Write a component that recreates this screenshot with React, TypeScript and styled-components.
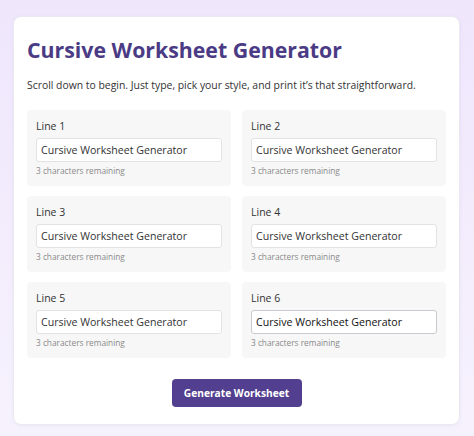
import React from "react";
import styled, { createGlobalStyle } from "styled-components";

const Global = createGlobalStyle`
  html, body {
    margin: 0;
    padding: 0;
  }
  body {
    font-family: "Open Sans", "Liberation Sans", sans-serif;
    background: linear-gradient(180deg, #efe6fc 0%, #f6f2fd 100%);
    min-height: 436px;
  }
`;

const Page = styled.div`
  padding: 16px 14px 12px 13px;
`;

const Card = styled.div`
  background: #ffffff;
  border-radius: 8px;
  border: 1px solid #ece8f2;
  box-shadow: 0 1px 4px rgba(80, 60, 140, 0.06);
  padding: 18px 13px 17px 13px;
`;

const Title = styled.h1`
  margin: 0;
  font-size: 21.3px;
  font-weight: 700;
  color: #4b3b85;
  line-height: 30px;
`;

const Intro = styled.p`
  margin: 11px 0 16px;
  font-size: 10.4px;
  color: #333333;
  line-height: 18px;
  white-space: nowrap;
`;

const Grid = styled.div`
  display: grid;
  grid-template-columns: 1fr 1fr;
  column-gap: 11px;
  row-gap: 10px;
`;

const Field = styled.div`
  background: #f7f7f7;
  border-radius: 4px;
  padding: 8px 9px 9px 9px;
  display: flex;
  flex-direction: column;
`;

const Label = styled.label`
  font-size: 10.5px;
  color: #333333;
  line-height: 16px;
  margin-bottom: 4px;
`;

const Input = styled.input<{ $focused?: boolean }>`
  height: 24px;
  box-sizing: border-box;
  border: 1px solid ${(p) => (p.$focused ? "#c9c9cf" : "#e3e3e3")};
  border-radius: 3px;
  background: #ffffff;
  padding: 0 4px;
  font-family: inherit;
  font-size: 10.6px;
  color: ${(p) => (p.$focused ? "#111111" : "#333333")};
  outline: none;
`;

const Hint = styled.span`
  margin-top: 3px;
  font-size: 8.3px;
  color: #8a8a8a;
  line-height: 12px;
`;

const Actions = styled.div`
  display: flex;
  justify-content: center;
  margin-top: 21px;
`;

const Button = styled.button`
  width: 130px;
  height: 28px;
  border: none;
  border-radius: 4px;
  background: #533f8f;
  color: #ffffff;
  font-family: inherit;
  font-size: 10.2px;
  font-weight: 700;
  cursor: pointer;
`;

const lines = [1, 2, 3, 4, 5, 6];

export default function App() {
  return (
    <>
      <Global />
      <Page>
        <Card>
          <Title>Cursive Worksheet Generator</Title>
          <Intro>
            Scroll down to begin. Just type, pick your style, and print it’s that
            straightforward.
          </Intro>
          <Grid>
            {lines.map((n) => (
              <Field key={n}>
                <Label>Line {n}</Label>
                <Input
                  $focused={n === 6}
                  defaultValue="Cursive Worksheet Generator"
                />
                <Hint>3 characters remaining</Hint>
              </Field>
            ))}
          </Grid>
          <Actions>
            <Button>Generate Worksheet</Button>
          </Actions>
        </Card>
      </Page>
    </>
  );
}
